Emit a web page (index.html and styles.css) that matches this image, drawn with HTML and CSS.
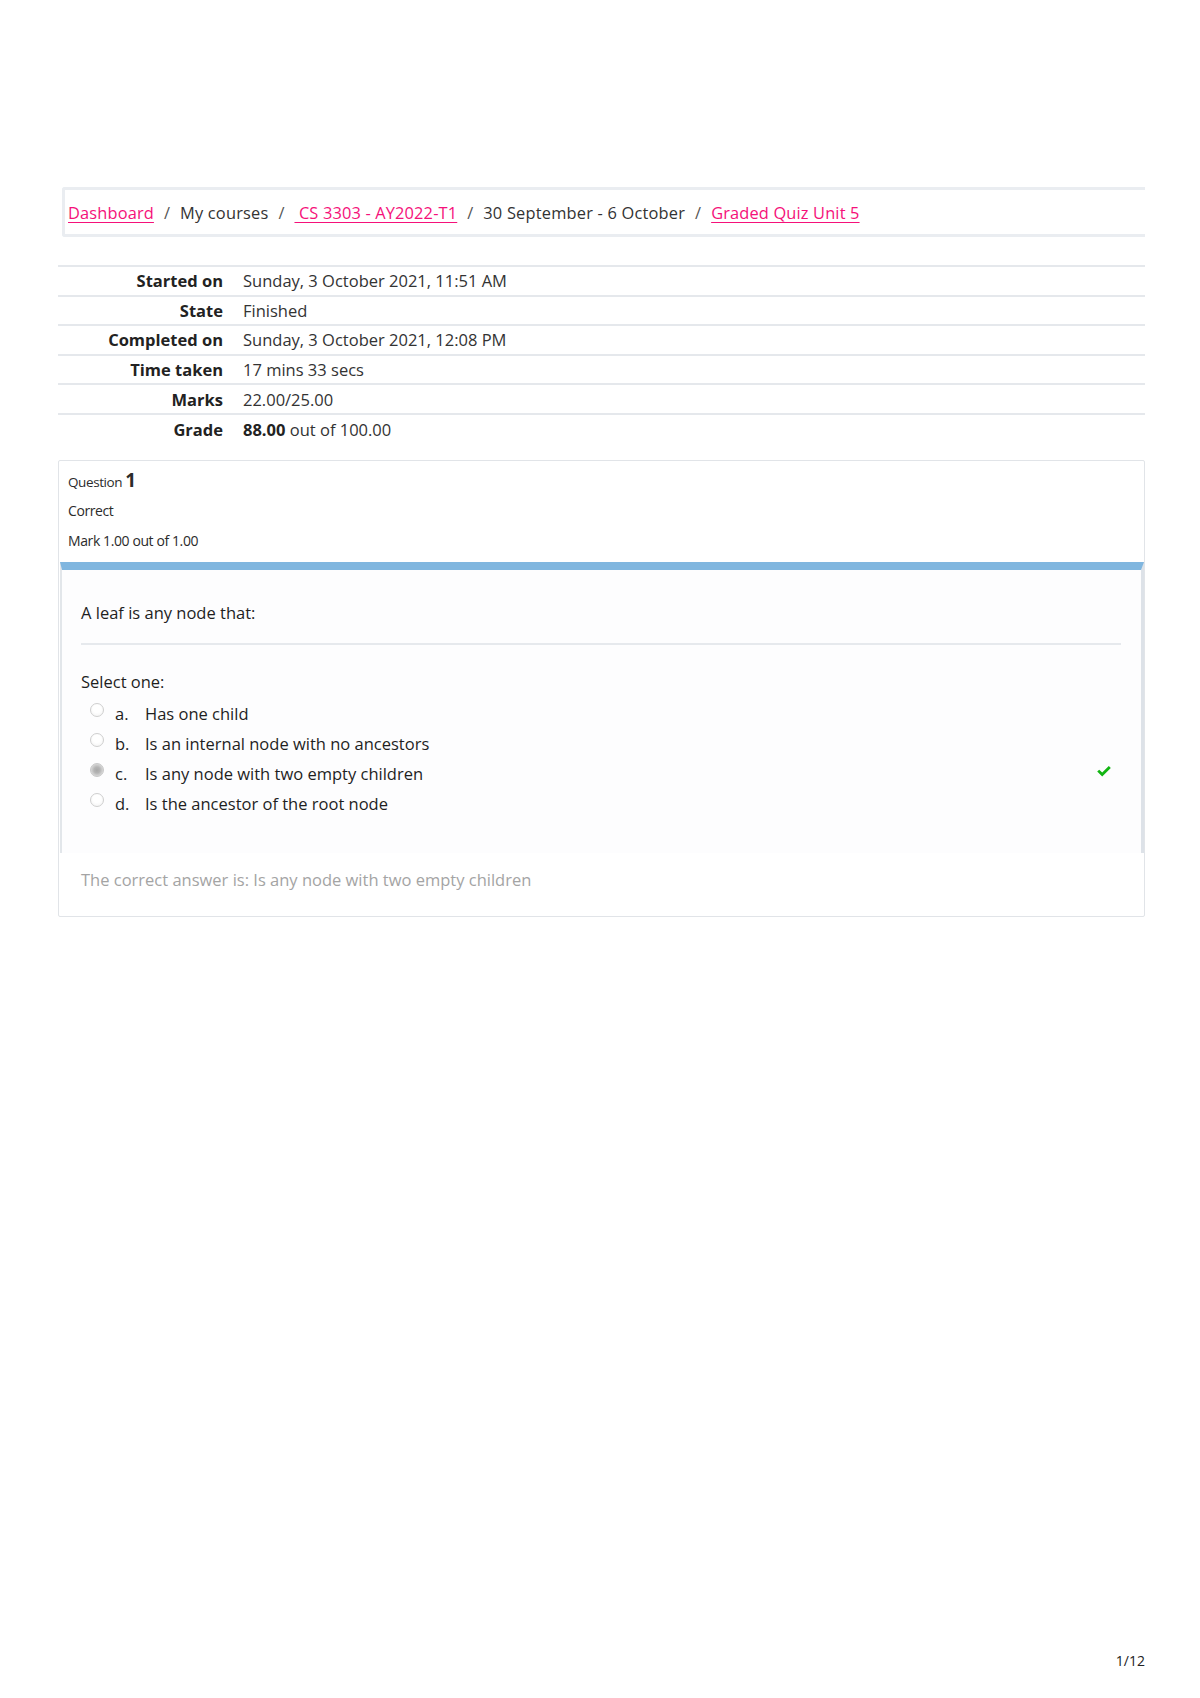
FILE: index.html
```html
<!DOCTYPE html>
<html lang="en">
<head>
<meta charset="utf-8">
<title>Graded Quiz Unit 5: Attempt review</title>
<link rel="stylesheet" href="styles.css">
</head>
<body>
<div class="page">
  <main class="content">
    <nav class="breadcrumb">
      <a href="#" class="crumb-link">Dashboard</a>
      <span class="sep">/</span>
      <span class="crumb">My courses</span>
      <span class="sep">/</span>
      <a href="#" class="crumb-link lead">&nbsp;CS 3303 - AY2022-T1</a>
      <span class="sep">/</span>
      <span class="crumb">30 September - 6 October</span>
      <span class="sep">/</span>
      <a href="#" class="crumb-link">Graded Quiz Unit 5</a>
    </nav>

    <table class="summary">
      <tbody>
        <tr><th>Started on</th><td>Sunday, 3 October 2021, 11:51 AM</td></tr>
        <tr><th>State</th><td>Finished</td></tr>
        <tr><th>Completed on</th><td>Sunday, 3 October 2021, 12:08 PM</td></tr>
        <tr><th>Time taken</th><td>17 mins 33 secs</td></tr>
        <tr><th>Marks</th><td>22.00/25.00</td></tr>
        <tr><th>Grade</th><td><b>88.00</b> out of 100.00</td></tr>
      </tbody>
    </table>

    <section class="que">
      <div class="info">
        <h3 class="qno">Question <span class="num">1</span></h3>
        <div class="state">Correct</div>
        <div class="grade">Mark 1.00 out of 1.00</div>
      </div>
      <div class="formulation">
        <p class="qtext">A leaf is any node that:</p>
        <div class="ablock">
          <p class="prompt">Select one:</p>
          <div class="answer">
            <div class="opt">
              <span class="radio"></span>
              <span class="letter">a.</span>
              <span class="otext">Has one child</span>
            </div>
            <div class="opt">
              <span class="radio"></span>
              <span class="letter">b.</span>
              <span class="otext">Is an internal node with no ancestors</span>
            </div>
            <div class="opt">
              <span class="radio checked"></span>
              <span class="letter">c.</span>
              <span class="otext">Is any node with two empty children</span>
              <svg class="tick" viewBox="0 0 16 13" width="16" height="13" aria-hidden="true">
                <path d="M1.2 6.6 L3.2 4.7 L6.2 7.6 L12.8 1 L14.8 3 L6.2 11.6 Z" fill="#12b512"/>
              </svg>
            </div>
            <div class="opt">
              <span class="radio"></span>
              <span class="letter">d.</span>
              <span class="otext">Is the ancestor of the root node</span>
            </div>
          </div>
        </div>
      </div>
      <div class="outcome">The correct answer is: Is any node with two empty children</div>
    </section>
  </main>
  <footer class="pageno">1/12</footer>
</div>
</body>
</html>
```

FILE: styles.css
```css
html, body {
  margin: 0;
  padding: 0;
  background: #ffffff;
}

body {
  font-family: "Open Sans", "Noto Sans", "DejaVu Sans", sans-serif;
  color: #2b2b2b;
}

.page {
  min-height: 1698px;
  display: flex;
  flex-direction: column;
  box-sizing: border-box;
  padding: 187px 55px 28px 58px;
}

.content {
  flex: 0 0 auto;
}

/* breadcrumb */
.breadcrumb {
  margin-left: 4px;
  height: 50px;
  box-sizing: border-box;
  border-top: 3px solid #eaedf1;
  border-bottom: 3px solid #eaedf1;
  border-left: 3px solid #eaedf1;
  border-radius: 3px 0 0 3px;
  display: flex;
  align-items: center;
  padding: 0 0 0 3px;
  font-size: 16.4px;
  color: #333;
  white-space: nowrap;
}

.crumb-link {
  color: #f5117a;
  text-decoration: underline;
  text-underline-offset: 3px;
  letter-spacing: 0.15px;
}

.crumb {
  color: #333;
  letter-spacing: 0.2px;
}

.sep {
  color: #555;
  padding: 0 10px 0 10px;
}

/* summary table */
.summary {
  margin-top: 28px;
  width: 100%;
  border-collapse: collapse;
  font-size: 16.5px;
}

.summary tr {
  height: 29.6px;
}

.summary th,
.summary td {
  border-top: 2px solid #e5e8ec;
  padding: 0;
  vertical-align: middle;
}

.summary th {
  width: 185px;
  text-align: right;
  font-weight: 700;
  color: #222;
  padding-right: 20px;
  box-sizing: border-box;
}

.summary td {
  color: #333;
  padding-left: 0;
}

.summary td b {
  color: #222;
}

/* question */
.que {
  margin-top: 16px;
  border: 1px solid #e1e4e8;
  border-radius: 2px;
}

.info {
  height: 101px;
  box-sizing: border-box;
  padding: 7px 9px 0;
  color: #2b2b2b;
  font-size: 14px;
  letter-spacing: -0.4px;
}

.qno {
  margin: 0;
  font-size: 13.5px;
  font-weight: 400;
  line-height: 24px;
}

.qno .num {
  font-size: 19px;
  font-weight: 700;
  letter-spacing: 0;
}

.state {
  line-height: 30px;
  margin-top: 2px;
}

.grade {
  line-height: 30px;
}

.formulation {
  margin-left: 1px;
  border-top: 8px solid #80b6df;
  border-left: 2px solid #e2e6ea;
  border-right: 3px solid #dde2e8;
  background: #fdfdfe;
  height: 291px;
  box-sizing: border-box;
  padding: 31px 20px 0 19px;
  color: #1f1f1f;
  font-size: 16.5px;
}

.qtext {
  margin: 0;
  line-height: 24px;
  padding-bottom: 18px;
  border-bottom: 2px solid #e6e9ed;
}

.ablock {
  padding-top: 25px;
}

.prompt {
  margin: 0 0 5px;
  line-height: 24px;
}

.answer {
  display: flex;
  flex-direction: column;
}

.opt {
  display: flex;
  align-items: center;
  height: 30px;
  padding-left: 9px;
}

.radio {
  width: 14px;
  height: 14px;
  border-radius: 50%;
  border: 1px solid #cfcfcf;
  background: radial-gradient(circle at 50% 40%, #ffffff 40%, #f0f0f0 100%);
  box-sizing: border-box;
  margin-top: -7px;
  flex: 0 0 auto;
}

.radio.checked {
  border-color: #c8c8c8;
  background: radial-gradient(circle, #a8a8a8 0, #b4b4b4 35%, #d6d6d6 70%, #e6e6e6 100%);
}

.letter {
  width: 30px;
  margin-left: 11px;
  flex: 0 0 auto;
}

.otext {
  flex: 0 0 auto;
}

.tick {
  margin-left: auto;
  margin-right: 9px;
  margin-top: -4px;
}

.outcome {
  padding: 14px 20px 0 22px;
  height: 63px;
  box-sizing: border-box;
  color: #a4a4a4;
  font-size: 16.5px;
  line-height: 26px;
}

/* page number */
.pageno {
  margin-top: auto;
  align-self: flex-end;
  font-size: 14px;
  color: #222;
}
```
